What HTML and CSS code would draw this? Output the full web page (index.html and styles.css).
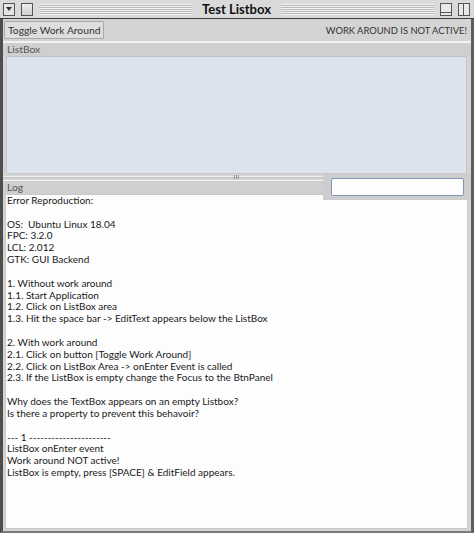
FILE: index.html
```html
<!DOCTYPE html>
<html>
<head>
<meta charset="utf-8">
<link rel="stylesheet" href="styles.css">
</head>
<body>
<div class="window">
  <div class="titlebar">
    <div class="tb-btn menu"><svg width="8" height="8" viewBox="0 0 8 8"><path d="M1 2h6L4 6z" fill="#333"/></svg></div>
    <div class="tb-btn plain"></div>
    <div class="stripes"></div>
    <div class="title">Test Listbox</div>
    <div class="stripes"></div>
    <div class="tb-btn shade"></div>
    <div class="tb-btn max"></div>
  </div>
  <div class="frame">
    <div class="btnpanel">
      <button class="btn">Toggle Work Around</button>
      <span class="status">WORK AROUND IS NOT ACTIVE!</span>
    </div>
    <div class="group-head top">ListBox</div>
    <div class="listbox"></div>
    <div class="splitter"><span class="grip"></span></div>
    <div class="group-head">Log</div>
    <div class="memo">Error Reproduction:

OS:  Ubuntu Linux 18.04
FPC: 3.2.0
LCL: 2.012
GTK: GUI Backend

1. Without work around
1.1. Start Application
1.2. Click on ListBox area
1.3. Hit the space bar -&gt; EditText appears below the ListBox

2. With work around
2.1. Click on button [Toggle Work Around]
2.2. Click on ListBox Area -&gt; onEnter Event is called
2.3. If the ListBox is empty change the Focus to the BtnPanel

Why does the TextBox appears on an empty Listbox?
Is there a property to prevent this behavoir?

--- 1 ----------------------
ListBox onEnter event
Work around NOT active!
ListBox is empty, press [SPACE] &amp; EditField appears.</div>
    <div class="editpop"><div class="editbox"></div></div>
  </div>
</div>
</body>
</html>
```

FILE: styles.css
```css
html, body {
  margin: 0;
  padding: 0;
  background: #5a5a5a;
}
body {
  font-family: Lato, "Open Sans", sans-serif;
  width: 474px;
  height: 533px;
  overflow: hidden;
}
.window {
  width: 474px;
  height: 533px;
  display: flex;
  flex-direction: column;
  box-sizing: border-box;
  background: #d4d4d4;
}
.titlebar {
  height: 18px;
  display: flex;
  align-items: center;
  gap: 4px;
  padding: 0 4px 0 3px;
  background: #dadada;
  border-bottom: 1px solid #3c3c3c;
}
.tb-btn {
  width: 10px;
  height: 11px;
  border: 1px solid #555;
  background: #e4e4e4;
  display: flex;
  align-items: center;
  justify-content: center;
  flex: none;
}
.tb-btn.menu { margin-right: 2px; }
.tb-btn.plain { background: linear-gradient(#eee, #cfcfcf); }
.tb-btn.shade { background: linear-gradient(#e8e8e8 0, #e8e8e8 70%, #555 70%, #555 78%, #e8e8e8 78%); }
.tb-btn.max {
  background: linear-gradient(90deg, #e8e8e8 0, #e8e8e8 45%, #555 45%, #555 55%, #e8e8e8 55%);
  margin-left: 2px;
}
.stripes {
  flex: 1;
  height: 11px;
  background: repeating-linear-gradient(#f2f2f2 0, #f2f2f2 1px, #b8b8b8 1px, #b8b8b8 2px);
  margin: 0 2px;
}
.title {
  font-weight: bold;
  font-size: 13px;
  color: #111;
  padding: 0 4px;
}
.frame {
  position: relative;
  flex: 1;
  display: flex;
  flex-direction: column;
  border-left: 3px solid #4e4e4e;
  border-right: 3px solid #5e5e5e;
  border-bottom: 2px solid #7a7a7a;
  background: #d4d4d4;
  padding: 0 0 2px 0;
}
.btnpanel {
  height: 22px;
  display: flex;
  align-items: center;
  justify-content: space-between;
  padding: 0 4px 0 1px;
}
.btn {
  font-family: Lato, "Open Sans", sans-serif;
  font-size: 10.3px;
  color: #333;
  height: 18px;
  padding: 0 3px;
  background: #dedede;
  border: 1px solid #a8a8a8;
  border-radius: 1px;
  margin: 0;
}
.status {
  font-size: 9.4px;
  color: #333;
}
.group-head {
  height: 13px;
  line-height: 13px;
  font-size: 10.3px;
  color: #555;
  padding-left: 4px;
  background: #cfcfcf;
  border-top: 1px solid #f2f2f2;
}
.group-head.top {
  border-top: 2px solid #f2f2f2;
}
.listbox {
  height: 116px;
  margin: 0 4px 0 3px;
  background: #dde3ec;
  border: 1px solid #c4c8cc;
  border-top-color: #bfc3c8;
}
.splitter {
  height: 6px;
  position: relative;
  background: linear-gradient(#d4d4d4 0, #d4d4d4 2px, #f0f0f0 2px, #f0f0f0 3px, #c2c2c2 3px, #c2c2c2 4px, #d4d4d4 4px);
}
.grip {
  position: absolute;
  left: 231px;
  top: 1px;
  width: 6px;
  height: 4px;
  background: repeating-linear-gradient(90deg, #999 0, #999 1px, transparent 1px, transparent 2px);
}
.memo {
  flex: 1;
  margin: 0 3px 0 2px;
  background: #fdfdfd;
  border: 1px solid #c8c8c8;
  white-space: pre;
  font-size: 10px;
  line-height: 11.83px;
  color: #1a1a1a;
  padding: 0 0 0 1px;
  overflow: hidden;
}
.editpop {
  position: absolute;
  left: 320px;
  top: 155px;
  width: 148px;
  height: 26px;
  background: #cdcdcd;
  display: flex;
  align-items: center;
  justify-content: center;
}
.editbox {
  width: 131px;
  height: 16px;
  background: #fdfdfd;
  border: 1px solid #7e98b8;
  border-radius: 2px;
}
```
